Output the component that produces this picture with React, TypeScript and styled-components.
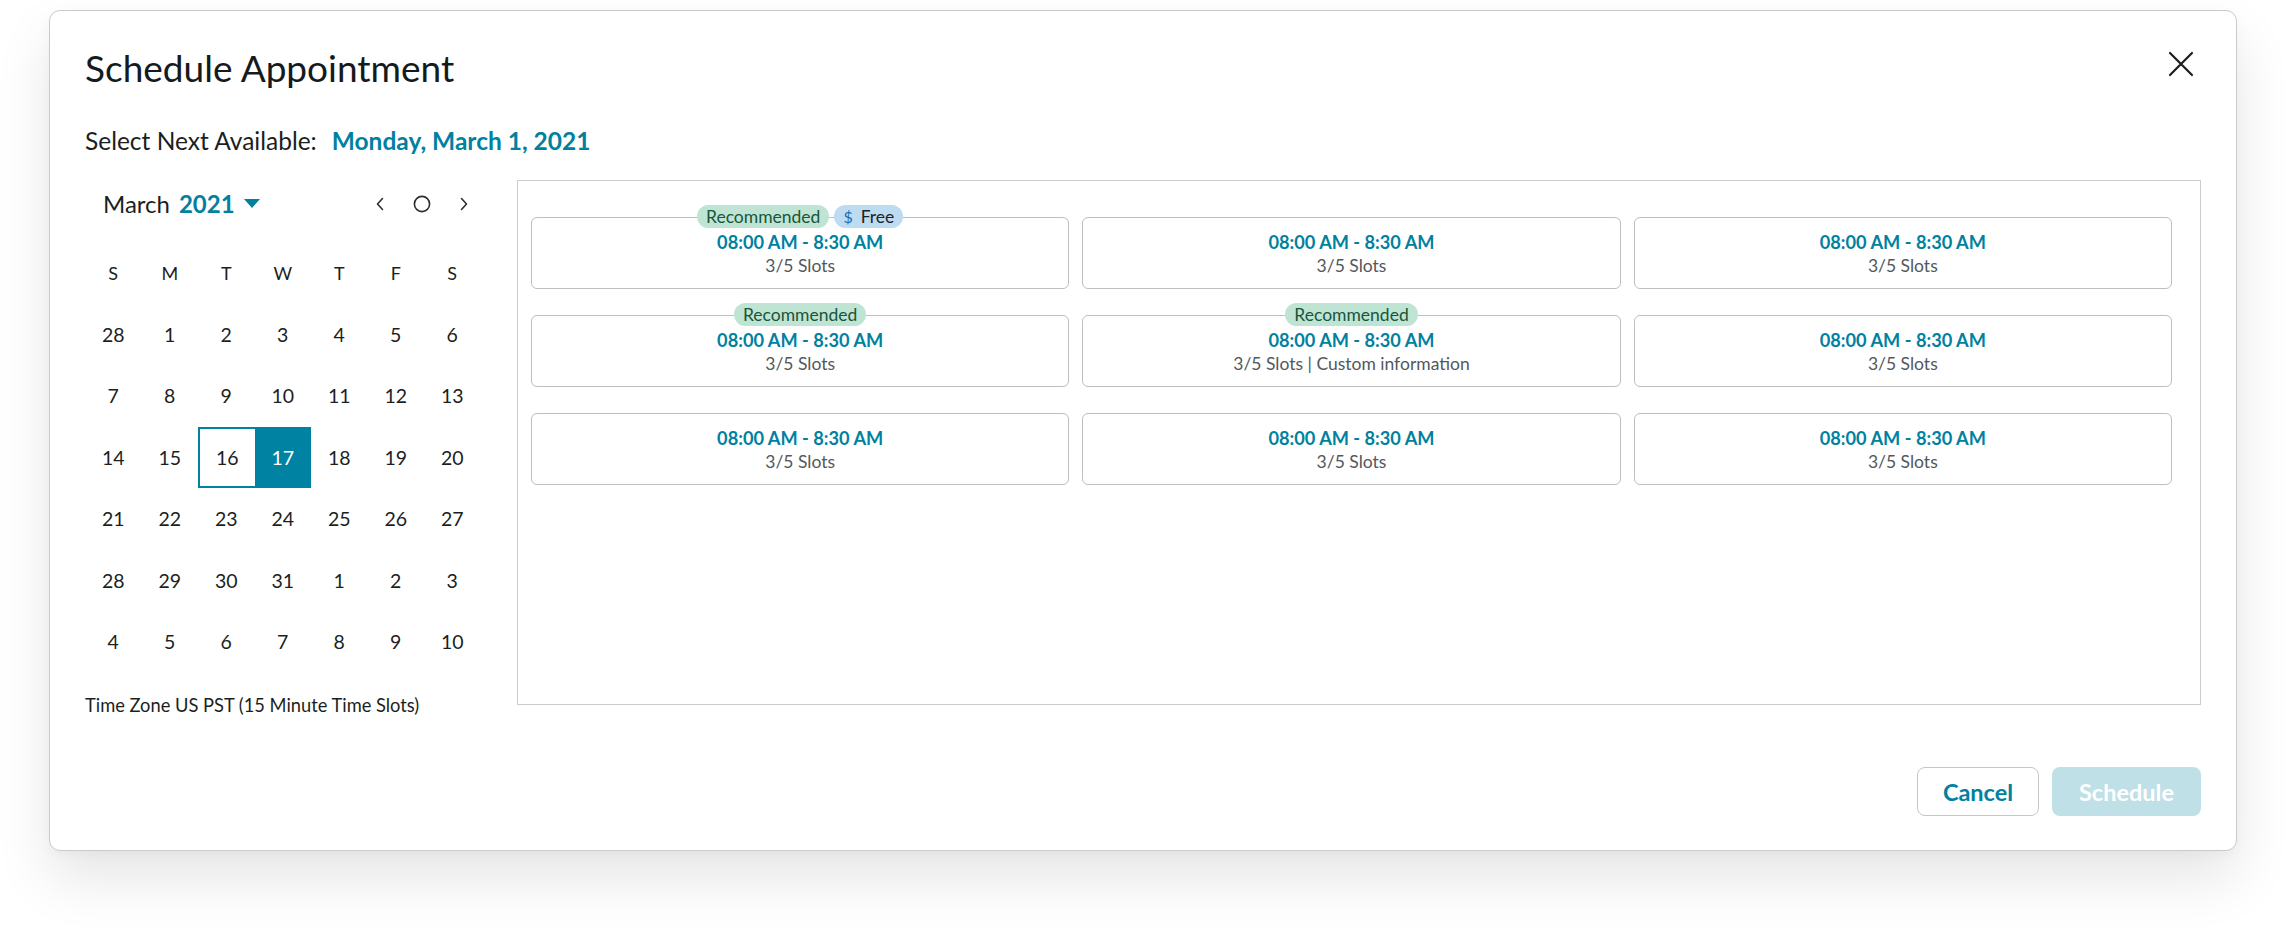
import React from 'react';
import styled, { createGlobalStyle } from 'styled-components';

const teal = '#00819f';

const GlobalStyle = createGlobalStyle`
  html, body {
    margin: 0;
    padding: 0;
    background: #ffffff;
    font-family: Lato, "Open Sans", sans-serif;
    color: #1b1f22;
  }
`;

const Page = styled.div`
  width: 2286px;
  height: 941px;
  padding-top: 10px;
  box-sizing: border-box;
`;

const Modal = styled.div`
  width: 2188px;
  height: 841px;
  margin: 0 auto;
  box-sizing: border-box;
  border: 1px solid #c6cbcf;
  border-radius: 11px;
  background: #fff;
  padding: 35px 35px 34px 35px;
  display: flex;
  flex-direction: column;
  box-shadow: 0 28px 56px rgba(0, 0, 0, 0.1), 0 4px 12px rgba(0, 0, 0, 0.03);
`;

const Header = styled.div`
  display: flex;
  align-items: center;
  justify-content: space-between;
  height: 44px;
`;

const Title = styled.h1`
  margin: 0;
  font-size: 37px;
  line-height: 44px;
  font-weight: 400;
  color: #151a1d;
`;

const CloseButton = styled.button`
  border: 0;
  background: none;
  padding: 0;
  margin-right: 7px;
  margin-top: -8px;
  width: 26px;
  height: 26px;
  display: flex;
  align-items: center;
  justify-content: center;
  cursor: pointer;
`;

const NextRow = styled.div`
  margin-top: 36px;
  height: 30px;
  display: flex;
  align-items: center;
  gap: 15px;
  font-size: 24.5px;
  line-height: 30px;
`;

const NextLabel = styled.span`
  color: #1b1f22;
`;

const NextDate = styled.a`
  color: ${teal};
  font-weight: 700;
  text-decoration: none;
`;

const Body = styled.div`
  margin-top: 24px;
  height: 525px;
  display: flex;
  gap: 36px;
`;

const CalendarCol = styled.div`
  width: 396px;
  flex: none;
`;

const CalHeader = styled.div`
  margin-top: 9px;
  height: 30px;
  display: flex;
  align-items: center;
  justify-content: space-between;
  padding-left: 18px;
  padding-right: 12px;
`;

const MonthLabel = styled.div`
  display: flex;
  align-items: center;
  gap: 9px;
  font-size: 24px;
  line-height: 30px;
`;

const Year = styled.span`
  color: ${teal};
  font-weight: 700;
`;

const NavGroup = styled.div`
  display: flex;
  align-items: center;
  gap: 28px;
`;

const NavButton = styled.button`
  border: 0;
  background: none;
  padding: 0;
  display: flex;
  align-items: center;
  justify-content: center;
  cursor: pointer;
`;

const Grid = styled.div`
  margin-top: 23px;
  display: grid;
  grid-template-columns: repeat(7, 56.5px);
  grid-auto-rows: 61.5px;
`;

const WeekDay = styled.div`
  display: flex;
  align-items: center;
  justify-content: center;
  font-size: 18px;
  color: #1b1f22;
`;

const Day = styled.div<{ $state?: 'today' | 'selected' }>`
  display: flex;
  align-items: center;
  justify-content: center;
  font-size: 19.5px;
  box-sizing: border-box;
  color: ${p => (p.$state === 'selected' ? '#fff' : '#1b1f22')};
  background: ${p => (p.$state === 'selected' ? '#0083a3' : 'transparent')};
  border: ${p => (p.$state === 'today' ? `2px solid #0083a3` : '0')};
  border-right-width: ${p => (p.$state === 'today' ? '0' : undefined)};
`;

const TimeZone = styled.div`
  margin-top: 20px;
  font-size: 18.3px;
  line-height: 24px;
  color: #1b1f22;
`;

const SlotPanel = styled.div`
  flex: 1;
  box-sizing: border-box;
  border: 1.5px solid #c8cdd0;
  padding: 36px 28px 13px 13px;
`;

const SlotGrid = styled.div`
  display: grid;
  grid-template-columns: repeat(3, 1fr);
  column-gap: 13px;
  row-gap: 26px;
`;

const SlotCard = styled.button`
  position: relative;
  height: 72px;
  box-sizing: border-box;
  border: 1.5px solid #b9bfc3;
  border-radius: 6px;
  background: #fff;
  display: flex;
  flex-direction: column;
  align-items: center;
  justify-content: center;
  padding: 2px 0 0;
  font-family: inherit;
  cursor: pointer;
`;

const SlotTime = styled.div`
  color: ${teal};
  font-weight: 700;
  font-size: 18.2px;
  line-height: 23px;
`;

const SlotInfo = styled.div`
  color: #53585c;
  font-size: 17.5px;
  line-height: 23px;
`;

const BadgeRow = styled.div`
  position: absolute;
  top: -13px;
  left: 0;
  right: 0;
  display: flex;
  justify-content: center;
  gap: 5px;
`;

const Badge = styled.span<{ $tone: 'green' | 'blue' }>`
  height: 23px;
  padding: 0 9px;
  border-radius: 12px;
  display: inline-flex;
  align-items: center;
  gap: 8px;
  font-size: 17.5px;
  line-height: 23px;
  background: ${p => (p.$tone === 'green' ? '#c0e4d4' : '#bddcf1')};
  color: ${p => (p.$tone === 'green' ? '#17563a' : '#1d2226')};
`;

const Dollar = styled.span`
  color: #1b6fb5;
  font-size: 16px;
`;

const Footer = styled.div`
  margin-top: 62px;
  display: flex;
  justify-content: flex-end;
  gap: 13px;
`;

const Button = styled.button<{ $primary?: boolean }>`
  height: 49px;
  box-sizing: border-box;
  border-radius: 8px;
  font-family: inherit;
  font-weight: 700;
  font-size: 23.5px;
  padding: 0;
  width: ${p => (p.$primary ? '149px' : '122px')};
  border: ${p => (p.$primary ? '0' : '1.5px solid #c2c7cb')};
  background: ${p => (p.$primary ? '#c0e0e8' : '#fff')};
  color: ${p => (p.$primary ? '#fff' : teal)};
  cursor: pointer;
`;

type Slot = {
  info: string;
  recommended?: boolean;
  free?: boolean;
};

const slots: Slot[] = [
  { info: '3/5 Slots', recommended: true, free: true },
  { info: '3/5 Slots' },
  { info: '3/5 Slots' },
  { info: '3/5 Slots', recommended: true },
  { info: '3/5 Slots | Custom information', recommended: true },
  { info: '3/5 Slots' },
  { info: '3/5 Slots' },
  { info: '3/5 Slots' },
  { info: '3/5 Slots' },
];

const weekDays = ['S', 'M', 'T', 'W', 'T', 'F', 'S'];

const days: number[] = [
  28,
  ...Array.from({ length: 31 }, (_, i) => i + 1),
  ...Array.from({ length: 10 }, (_, i) => i + 1),
];

const ChevronLeft = () => (
  <svg width="10" height="14" viewBox="0 0 10 14" fill="none">
    <path d="M7.5 1.5 L2.5 7 L7.5 12.5" stroke="#2a2f33" strokeWidth="1.6" strokeLinecap="round" strokeLinejoin="round" />
  </svg>
);

const ChevronRight = () => (
  <svg width="10" height="14" viewBox="0 0 10 14" fill="none">
    <path d="M2.5 1.5 L7.5 7 L2.5 12.5" stroke="#2a2f33" strokeWidth="1.6" strokeLinecap="round" strokeLinejoin="round" />
  </svg>
);

const TodayCircle = () => (
  <svg width="18" height="18" viewBox="0 0 18 18" fill="none">
    <circle cx="9" cy="9" r="7.6" stroke="#2a2f33" strokeWidth="1.6" />
  </svg>
);

const Caret = () => (
  <svg width="16" height="10" viewBox="0 0 16 10">
    <path d="M0 0 H16 L8 9 Z" fill={teal} />
  </svg>
);

const CloseIcon = () => (
  <svg width="26" height="26" viewBox="0 0 26 26" fill="none">
    <path d="M2 2 L24 24 M24 2 L2 24" stroke="#1b1f22" strokeWidth="2.2" strokeLinecap="round" />
  </svg>
);

export default function App() {
  return (
    <Page>
      <GlobalStyle />
      <Modal>
        <Header>
          <Title>Schedule Appointment</Title>
          <CloseButton aria-label="Close">
            <CloseIcon />
          </CloseButton>
        </Header>

        <NextRow>
          <NextLabel>Select Next Available:</NextLabel>
          <NextDate href="#">Monday, March 1, 2021</NextDate>
        </NextRow>

        <Body>
          <CalendarCol>
            <CalHeader>
              <MonthLabel>
                <span>March</span>
                <Year>2021</Year>
                <Caret />
              </MonthLabel>
              <NavGroup>
                <NavButton aria-label="Previous month"><ChevronLeft /></NavButton>
                <NavButton aria-label="Today"><TodayCircle /></NavButton>
                <NavButton aria-label="Next month"><ChevronRight /></NavButton>
              </NavGroup>
            </CalHeader>
            <Grid>
              {weekDays.map((d, i) => (
                <WeekDay key={'w' + i}>{d}</WeekDay>
              ))}
              {days.map((d, i) => (
                <Day
                  key={'d' + i}
                  $state={i === 16 ? 'today' : i === 17 ? 'selected' : undefined}
                >
                  {d}
                </Day>
              ))}
            </Grid>
            <TimeZone>Time Zone US PST (15 Minute Time Slots)</TimeZone>
          </CalendarCol>

          <SlotPanel>
            <SlotGrid>
              {slots.map((s, i) => (
                <SlotCard key={i}>
                  {(s.recommended || s.free) && (
                    <BadgeRow>
                      {s.recommended && <Badge $tone="green">Recommended</Badge>}
                      {s.free && (
                        <Badge $tone="blue">
                          <Dollar>$</Dollar>Free
                        </Badge>
                      )}
                    </BadgeRow>
                  )}
                  <SlotTime>08:00 AM - 8:30 AM</SlotTime>
                  <SlotInfo>{s.info}</SlotInfo>
                </SlotCard>
              ))}
            </SlotGrid>
          </SlotPanel>
        </Body>

        <Footer>
          <Button>Cancel</Button>
          <Button $primary>Schedule</Button>
        </Footer>
      </Modal>
    </Page>
  );
}
